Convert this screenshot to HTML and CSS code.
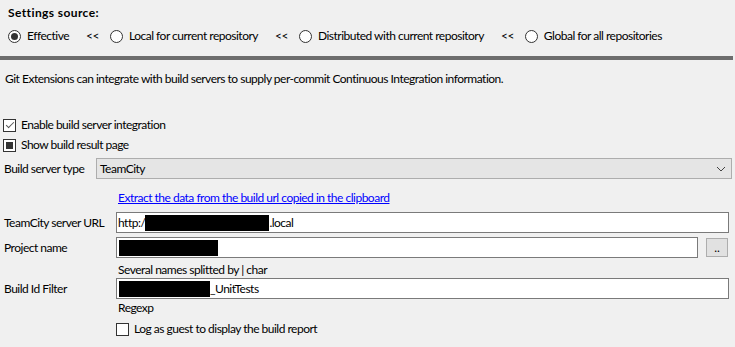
FILE: index.html
```html
<!DOCTYPE html>
<html lang="en">
<head>
<meta charset="UTF-8" />
<title>Build server integration</title>
<link rel="stylesheet" href="styles.css">
</head>
<body>

  <!-- settings source -->
  <div class="source">
    <div class="source-title">Settings source:</div>
    <div class="source-row">
      <label class="opt"><input type="radio" name="src" checked /> <span>Effective</span></label>
      <span class="sep">&lt;&lt;</span>
      <label class="opt"><input type="radio" name="src" /> <span>Local for current repository</span></label>
      <span class="sep">&lt;&lt;</span>
      <label class="opt"><input type="radio" name="src" /> <span>Distributed with current repository</span></label>
      <span class="sep">&lt;&lt;</span>
      <label class="opt"><input type="radio" name="src" /> <span>Global for all repositories</span></label>
    </div>
  </div>
  <div class="rule"></div>

  <p class="desc">Git Extensions can integrate with build servers to supply per-commit Continuous Integration information.</p>

  <label class="check first"><input type="checkbox" checked /> <span>Enable build server integration</span></label>
  <label class="check"><input type="checkbox" class="mixed" /> <span>Show build result page</span></label>

  <div class="type-row">
    <span class="type-label">Build server type</span>
    <div class="combo">
      <span>TeamCity</span>
      <svg width="10" height="6" viewBox="0 0 10 6"><polyline points="1,1 5,5 9,1" fill="none" stroke="#444" stroke-width="1" /></svg>
    </div>
  </div>

  <div class="form">
    <div class="row link-row">
      <span class="lbl"></span>
      <a class="link" href="#">Extract the data from the build url copied in the clipboard</a>
    </div>

    <div class="row url-row">
      <span class="lbl">TeamCity server URL</span>
      <div class="field">http:/<span class="redact w-url"></span>.local</div>
    </div>

    <div class="row proj-row">
      <span class="lbl">Project name</span>
      <div class="field"><span class="redact w-proj"></span></div>
      <button class="dots">..</button>
    </div>

    <div class="row hint-row">
      <span class="lbl"></span>
      <span class="hint">Several names splitted by | char</span>
    </div>

    <div class="row id-row">
      <span class="lbl">Build Id Filter</span>
      <div class="field"><span class="redact w-id"></span>_UnitTests</div>
    </div>

    <div class="row regexp-row">
      <span class="lbl"></span>
      <span class="hint">Regexp</span>
    </div>

    <div class="row guest-row">
      <span class="lbl"></span>
      <label class="check guest"><input type="checkbox" /> <span>Log as guest to display the build report</span></label>
    </div>
  </div>

<script>
  document.querySelector('.mixed').indeterminate = true;
</script>
</body>
</html>
```

FILE: styles.css
```css
body {
  margin: 0;
  background: #f0f0f0;
  color: #000;
  font-family: Lato, sans-serif;
  font-size: 12px;
  line-height: 16px;
  letter-spacing: -0.5px;
  white-space: nowrap;
}
.source {
  padding: 5px 0 0 8px;
}
.source-title {
  font-weight: bold;
  letter-spacing: 0.4px;
}
.source-row {
  display: flex;
  align-items: center;
  margin-top: 7px;
  height: 16px;
}
.opt {
  display: flex;
  align-items: center;
  gap: 6px;
  flex-shrink: 0;
}
.sep {
  margin: 0 11px 0 17px;
}
input[type="radio"] {
  appearance: none;
  margin: 0;
  width: 13px;
  height: 13px;
  border: 1px solid #333;
  border-radius: 50%;
  background: #fff;
  display: grid;
  place-content: center;
}
input[type="radio"]:checked::before {
  content: '';
  width: 7px;
  height: 7px;
  border-radius: 50%;
  background: #333;
}
.rule {
  height: 4px;
  background: #6d6d6d;
  margin: 12px 2px 0 0;
}
.desc {
  margin: 11px 0 0 5px;
}
.check {
  display: flex;
  align-items: center;
  gap: 5px;
  height: 16px;
  margin: 4px 0 0 3px;
}
.check.first {
  margin-top: 30px;
}
input[type="checkbox"] {
  appearance: none;
  margin: 0;
  width: 13px;
  height: 13px;
  border: 1px solid #333;
  background: #fff;
  display: grid;
  place-content: center;
  flex-shrink: 0;
}
input[type="checkbox"]:checked::before {
  content: '';
  width: 7px;
  height: 3px;
  border-left: 1px solid #555;
  border-bottom: 1px solid #555;
  transform: translateY(-1px) rotate(-45deg);
}
input[type="checkbox"]:indeterminate::before {
  content: '';
  width: 7px;
  height: 7px;
  background: #333;
}
.type-row {
  display: flex;
  align-items: center;
  margin: 5px 3px 0 4px;
}
.type-label {
  width: 92px;
  flex-shrink: 0;
}
.combo {
  flex: 1;
  height: 21px;
  box-sizing: border-box;
  display: flex;
  align-items: center;
  justify-content: space-between;
  padding: 0 5px 0 3px;
  background: #e5e5e5;
  border: 1px solid #adadad;
}
.form {
  padding: 11px 6px 0 4px;
}
.row {
  display: flex;
  align-items: center;
}
.lbl {
  width: 112px;
  flex-shrink: 0;
}
.url-row { margin-top: 6px; }
.proj-row { margin-top: 4px; }
.hint-row { margin-top: 4px; }
.regexp-row { margin-top: 1px; }
.guest-row { margin-top: 5px; }
.link {
  color: #0000ff;
  margin-left: 2px;
}
.field {
  flex: 1;
  height: 21px;
  box-sizing: border-box;
  border: 1px solid #7a7a7a;
  background: #fff;
  display: flex;
  align-items: center;
  padding: 0 1px;
}
.redact {
  display: inline-block;
  height: 16px;
  background: #000;
}
.w-url { width: 124px; }
.w-proj { width: 99px; margin-left: 1px; }
.w-id { width: 91px; margin-left: 1px; }
.dots {
  width: 22px;
  height: 19px;
  margin: 0 1px 0 8px;
  padding: 0;
  border: 1px solid #adadad;
  background: #e1e1e1;
  font: inherit;
  line-height: 12px;
}
.hint {
  margin-left: 2px;
}
.check.guest {
  margin: 0;
}
```
